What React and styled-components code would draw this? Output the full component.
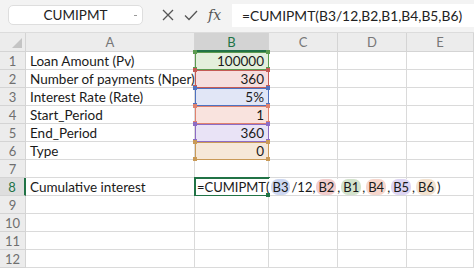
import React from 'react';
import styled, { createGlobalStyle } from 'styled-components';

const GlobalStyle = createGlobalStyle`
  html, body {
    margin: 0;
    padding: 0;
    background: #fff;
  }
  body {
    font-family: Lato, "Open Sans", sans-serif;
    color: #1a1a1a;
    overflow: hidden;
  }
`;

const Frame = styled.div`
  width: 474px;
  height: 268px;
  overflow: hidden;
  background: #fff;
`;

// formula bar
const TopBar = styled.div`
  height: 33px;
  box-sizing: border-box;
  display: flex;
  align-items: flex-start;
  padding-top: 4px;
  background: #f3f3f3;
  border-bottom: 1px solid #dcdcdc;
`;

const NameBox = styled.div`
  position: relative;
  margin: 1px 0 0 8px;
  width: 135px;
  height: 20px;
  box-sizing: border-box;
  display: flex;
  align-items: center;
  justify-content: center;
  background: #fff;
  border: 1px solid #dedede;
  border-radius: 5px;
  font-size: 13.5px;
  color: #222;

  &::after {
    content: '';
    position: absolute;
    right: 5px;
    top: 9px;
    width: 3px;
    height: 1px;
    background: #999;
  }
`;

const Tools = styled.div`
  width: 89px;
  height: 22px;
  display: flex;
  align-items: center;
  gap: 10px;
  padding-left: 19px;
  box-sizing: border-box;
  color: #555;
`;

const Fx = styled.span`
  font-family: "DejaVu Serif", serif;
  font-style: italic;
  font-size: 14px;
  color: #555;
`;

const FormulaInput = styled.div`
  flex: 1;
  height: 23px;
  box-sizing: border-box;
  display: flex;
  align-items: center;
  padding-left: 10px;
  background: #fff;
  font-size: 13.8px;
  color: #222;
`;

// sheet
const Grid = styled.div`
  display: grid;
  grid-template-columns: 26px 169px 74px 69px 69px 1fr;
  grid-template-rows: 19px repeat(12, 18px);
`;

const Corner = styled.div`
  background: #ececec;
  border-right: 1px solid #d4d4d4;
  border-bottom: 1px solid #d4d4d4;
  display: flex;
  align-items: flex-end;
  justify-content: flex-end;
  padding: 0 3px 3px 0;
`;

const ColHead = styled.div`
  box-sizing: border-box;
  display: flex;
  align-items: center;
  justify-content: center;
  font-size: 13px;
  background: ${(p) => (p.$active ? '#d3d3d3' : '#ececec')};
  color: ${(p) => (p.$active ? '#217346' : '#777')};
  border-right: 1px solid #d4d4d4;
  border-bottom: ${(p) => (p.$active ? '2px solid #217346' : '1px solid #d4d4d4')};
`;

const RowHead = styled.div`
  box-sizing: border-box;
  display: flex;
  align-items: center;
  justify-content: center;
  font-size: 13px;
  background: ${(p) => (p.$active ? '#dedede' : '#ececec')};
  color: ${(p) => (p.$active ? '#217346' : '#6f6f6f')};
  border-bottom: 1px solid #d4d4d4;
  border-right: ${(p) => (p.$active ? '2px solid #217346' : '1px solid #d4d4d4')};
`;

const Cell = styled.div`
  position: relative;
  box-sizing: border-box;
  display: flex;
  align-items: center;
  justify-content: ${(p) => (p.$right ? 'flex-end' : 'flex-start')};
  padding: 0 4px;
  font-size: 13.5px;
  white-space: nowrap;
  background: ${(p) => p.$fill || '#fff'};
  border-right: 1px solid #dadada;
  border-bottom: 1px solid #dadada;
  ${(p) => p.$edge && `outline: 1px solid ${p.$edge}; outline-offset: -1px;`}
  ${(p) => p.$current && `outline: 2px solid #217346; outline-offset: -1px;`}
`;

const Handle = styled.span`
  position: absolute;
  width: 4px;
  height: 4px;
  background: ${(p) => p.$color};
  ${(p) => (p.$top ? 'top: -2px;' : 'bottom: -2px;')}
  ${(p) => (p.$left ? 'left: -2px;' : 'right: -2px;')}
  z-index: 2;
`;

const Overflow = styled.span`
  position: relative;
  z-index: 1;
  background: #fff;
  margin-left: -2px;
  font-size: 13px;
  line-height: 16px;
`;

const Ref = styled.span`
  display: inline-block;
  background: ${(p) => p.$bg};
  border-radius: 7px;
  padding: 0 2px;
  margin: 0 1px;
  line-height: 16px;
`;

const ranges = [
  { label: 'Loan Amount (Pv)', value: '100000', edge: '#5b9a4f', fill: '#e3efdc', pill: '#d3e3cc' },
  { label: 'Number of payments (Nper)', value: '360', edge: '#c45a55', fill: '#f6dede', pill: '#f2cccc' },
  { label: 'Interest Rate (Rate)', value: '5%', edge: '#4f72c0', fill: '#e1e6f6', pill: '#cdd7f1' },
  { label: 'Start_Period', value: '1', edge: '#e0826e', fill: '#f9e3de', pill: '#f6d6cc' },
  { label: 'End_Period', value: '360', edge: '#8d6cc4', fill: '#e9e3f6', pill: '#ddd5f3' },
  { label: 'Type', value: '0', edge: '#c99a57', fill: '#f6e8d8', pill: '#f3e2cf' },
];

const Corners = ({ color }) => (
  <>
    <Handle $color={color} $top $left />
    <Handle $color={color} $top />
    <Handle $color={color} $left />
    <Handle $color={color} />
  </>
);

const Blank = () => (
  <>
    <Cell />
    <Cell />
    <Cell />
  </>
);

const App = () => (
  <Frame>
    <GlobalStyle />
    <TopBar>
      <NameBox>CUMIPMT</NameBox>
      <Tools>
        <svg width="12" height="12" viewBox="0 0 12 12">
          <path d="M1 1 L11 11 M11 1 L1 11" stroke="#555" strokeWidth="1.3" fill="none" />
        </svg>
        <svg width="14" height="11" viewBox="0 0 14 11">
          <path d="M1 5.5 L5 9.5 L13 1" stroke="#555" strokeWidth="1.3" fill="none" />
        </svg>
        <Fx>fx</Fx>
      </Tools>
      <FormulaInput>=CUMIPMT(B3/12,B2,B1,B4,B5,B6)</FormulaInput>
    </TopBar>

    <Grid>
      <Corner>
        <svg width="10" height="10" viewBox="0 0 10 10">
          <path d="M10 0 L10 10 L0 10 Z" fill="#c4c4c4" />
        </svg>
      </Corner>
      <ColHead>A</ColHead>
      <ColHead $active>B</ColHead>
      <ColHead>C</ColHead>
      <ColHead>D</ColHead>
      <ColHead>E</ColHead>

      {ranges.map((r, i) => (
        <React.Fragment key={r.label}>
          <RowHead>{i + 1}</RowHead>
          <Cell>{r.label}</Cell>
          <Cell $right $fill={r.fill} $edge={r.edge}>
            {r.value}
            <Corners color={r.edge} />
          </Cell>
          <Blank />
        </React.Fragment>
      ))}

      <RowHead>7</RowHead>
      <Cell />
      <Cell />
      <Blank />

      <RowHead $active>8</RowHead>
      <Cell>Cumulative interest</Cell>
      <Cell $current>
        <Overflow>
          {'=CUMIPMT('}
          <Ref $bg={ranges[2].pill}>B3</Ref>
          {'/12,'}
          <Ref $bg={ranges[1].pill}>B2</Ref>
          {','}
          <Ref $bg={ranges[0].pill}>B1</Ref>
          {','}
          <Ref $bg={ranges[3].pill}>B4</Ref>
          {','}
          <Ref $bg={ranges[4].pill}>B5</Ref>
          {','}
          <Ref $bg={ranges[5].pill}>B6</Ref>
          {')'}
        </Overflow>
        <Handle $color="#217346" />
      </Cell>
      <Cell />
      <Cell />
      <Cell />

      {[9, 10, 11, 12].map((n) => (
        <React.Fragment key={n}>
          <RowHead>{n}</RowHead>
          <Cell />
          <Cell />
          <Blank />
        </React.Fragment>
      ))}
    </Grid>
  </Frame>
);

export default App;
